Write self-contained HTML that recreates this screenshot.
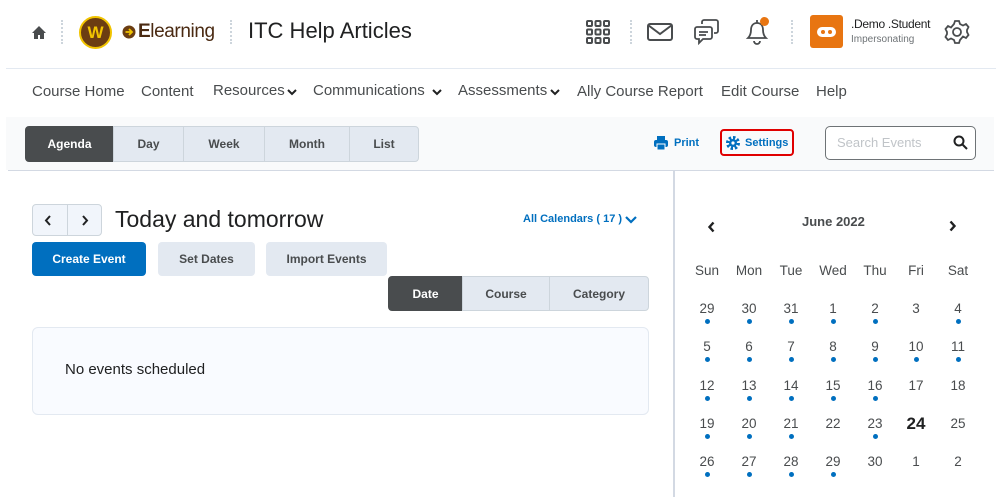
<!DOCTYPE html>
<html><head><style>
*{box-sizing:border-box;margin:0;padding:0}
body{width:1002px;height:497px;overflow:hidden;background:#fff;font-family:"Liberation Sans",sans-serif;color:#494c4e;position:relative}
.a{position:absolute}
.t{position:absolute;white-space:nowrap}
.nav{font-size:15px;color:#494c4e;top:83px}
.seg{position:absolute;top:126px;height:36px;background:#e3e9f1;border:1px solid #cdd5dc;font-size:12px;font-weight:bold;color:#494c4e;display:flex;align-items:center;justify-content:center}
.btn{position:absolute;height:34px;border-radius:4px;display:flex;align-items:center;justify-content:center;font-size:12px;font-weight:bold}
.cal{position:absolute;width:40px;text-align:center;font-size:13.5px;color:#494c4e}
.dot{position:absolute;width:5px;height:5px;border-radius:50%;background:#006fbf}
.dv{position:absolute;width:2px;height:24px;border-left:2px dotted #cdd5dc}
.chev{position:absolute}
</style></head><body>
<!-- header -->
<svg class="a" style="left:31px;top:25px" width="16" height="15" viewBox="0 0 16 15"><path d="M8 1L1 8h2v6h4v-4h2v4h4V8h2z" fill="#494c4e"/></svg>
<div class="dv" style="left:61px;top:20px"></div>
<div class="a" style="left:79px;top:16px;width:33px;height:33px;border-radius:50%;background:#6b3d12;border:2px solid #f1c400"></div>
<div class="t" style="left:79px;top:23px;width:33px;text-align:center;font-size:17px;font-weight:bold;color:#f1c400">W</div>
<svg class="a" style="left:122px;top:25px" width="14" height="14" viewBox="0 0 14 14"><circle cx="7" cy="7" r="6.5" fill="#6b3d12"/><path d="M3.5 7h6M7 4l3 3-3 3" fill="none" stroke="#f1c400" stroke-width="1.8"/></svg>
<div class="t" style="left:138px;top:21px;font-size:19px;color:#4a2a12;letter-spacing:-0.4px"><b>E</b>learning</div>
<div class="dv" style="left:230px;top:20px"></div>
<div class="t" style="left:248px;top:18px;font-size:22px;color:#202122">ITC Help Articles</div>
<svg class="a" style="left:586px;top:20px" width="24" height="24" viewBox="0 0 24 24" fill="none" stroke="#494c4e" stroke-width="2"><rect x="1" y="1" width="5" height="5" rx="1"/><rect x="9.5" y="1" width="5" height="5" rx="1"/><rect x="18" y="1" width="5" height="5" rx="1"/><rect x="1" y="9.5" width="5" height="5" rx="1"/><rect x="9.5" y="9.5" width="5" height="5" rx="1"/><rect x="18" y="9.5" width="5" height="5" rx="1"/><rect x="1" y="18" width="5" height="5" rx="1"/><rect x="9.5" y="18" width="5" height="5" rx="1"/><rect x="18" y="18" width="5" height="5" rx="1"/></svg>
<div class="dv" style="left:630px;top:20px"></div>
<svg class="a" style="left:647px;top:23px" width="26" height="18" viewBox="0 0 26 18" fill="none" stroke="#494c4e" stroke-width="2"><rect x="1" y="1" width="24" height="16" rx="2"/><path d="M1 2l12 9 12-9"/></svg>
<svg class="a" style="left:694px;top:19px" width="26" height="26" viewBox="0 0 26 26" fill="none" stroke="#494c4e" stroke-width="1.8"><path d="M8 5V3a2 2 0 012-2h12a2 2 0 012 2v9a2 2 0 01-2 2h-2"/><path d="M3 8h13a2 2 0 012 2v8a2 2 0 01-2 2H9l-4 4v-4H3a2 2 0 01-2-2v-8a2 2 0 012-2z"/><path d="M5 13h9M5 16h7"/></svg>
<svg class="a" style="left:744px;top:17px" width="26" height="28" viewBox="0 0 26 28" fill="none" stroke="#494c4e" stroke-width="1.8"><path d="M4 21c2-2 3-4 3-8s2-7 6-7 6 3 6 7 1 6 3 8z"/><path d="M10 24a3 3 0 006 0"/><path d="M13 3v3"/></svg>
<div class="a" style="left:760px;top:17px;width:9px;height:9px;border-radius:50%;background:#e87511"></div>
<div class="dv" style="left:791px;top:20px"></div>
<div class="a" style="left:810px;top:15px;width:33px;height:33px;border-radius:3px;background:#e87511"></div>
<div class="a" style="left:817px;top:27px;width:19px;height:10px;border-radius:5px;background:#fff"></div>
<div class="a" style="left:821px;top:30px;width:4px;height:4px;border-radius:50%;background:#e87511"></div>
<div class="a" style="left:828px;top:30px;width:4px;height:4px;border-radius:50%;background:#e87511"></div>
<div class="t" style="left:851px;top:17px;font-size:12px;color:#202122;letter-spacing:-0.3px">.Demo .Student</div>
<div class="t" style="left:851px;top:34px;font-size:10px;color:#6e7376">Impersonating</div>
<svg class="a" style="left:944px;top:19px" width="26" height="26" viewBox="0 0 26 26" fill="none" stroke="#494c4e" stroke-width="1.8"><circle cx="13" cy="13" r="4"/><path d="M11 2h4l1 3 3 1.5 3-1.5 2.5 3-1.5 3v2l1.5 3-2.5 3-3-1.5L16 21l-1 3h-4l-1-3-3-1.5L4 21l-2.5-3L3 15v-2L1.5 10 4 7l3 1.5L10 5z"/></svg>
<div class="a" style="left:6px;top:68px;width:990px;height:1px;background:#e3e9f1"></div>
<!-- nav -->
<div class="t nav" style="left:32px">Course Home</div>
<div class="t nav" style="left:141px">Content</div>
<div class="t nav" style="left:213px;top:82px">Resources</div>
<svg class="chev" style="left:287px;top:89px" width="10" height="7" viewBox="0 0 10 7" fill="none" stroke="#202122" stroke-width="2"><path d="M1 1l4 4 4-4"/></svg>
<div class="t nav" style="left:313px;top:82px">Communications</div>
<svg class="chev" style="left:432px;top:89px" width="10" height="7" viewBox="0 0 10 7" fill="none" stroke="#202122" stroke-width="2"><path d="M1 1l4 4 4-4"/></svg>
<div class="t nav" style="left:458px;top:82px">Assessments</div>
<svg class="chev" style="left:550px;top:89px" width="10" height="7" viewBox="0 0 10 7" fill="none" stroke="#202122" stroke-width="2"><path d="M1 1l4 4 4-4"/></svg>
<div class="t nav" style="left:577px">Ally Course Report</div>
<div class="t nav" style="left:721px">Edit Course</div>
<div class="t nav" style="left:816px">Help</div>
<!-- toolbar -->
<div class="a" style="left:6px;top:117px;width:988px;height:53px;background:#f9fafb"></div>
<div class="a" style="left:8px;top:170px;width:986px;height:1px;background:#d3d9e3"></div>
<div class="seg" style="left:25px;width:89px;background:#494c4e;color:#fff;border-color:#494c4e;border-radius:4px 0 0 4px">Agenda</div>
<div class="seg" style="left:113px;width:71px">Day</div>
<div class="seg" style="left:183px;width:82px">Week</div>
<div class="seg" style="left:264px;width:86px">Month</div>
<div class="seg" style="left:349px;width:70px;border-radius:0 4px 4px 0">List</div>
<svg class="a" style="left:654px;top:136px" width="14" height="14" viewBox="0 0 14 14"><rect x="3" y="0" width="8" height="4" fill="#006fbf"/><rect x="0" y="4" width="14" height="7" rx="2" fill="#006fbf"/><rect x="3" y="8" width="8" height="6" fill="#006fbf" stroke="#fff"/></svg>
<div class="t" style="left:674px;top:137px;font-size:11px;font-weight:bold;color:#006fbf">Print</div>
<div class="a" style="left:720px;top:129px;width:74px;height:27px;border:2px solid #e00000;border-radius:4px"></div>
<svg class="a" style="left:726px;top:136px" width="14" height="14" viewBox="0 0 14 14"><circle cx="7" cy="7" r="5" fill="none" stroke="#006fbf" stroke-width="4" stroke-dasharray="2.2 1.7"/><circle cx="7" cy="7" r="4" fill="#006fbf"/><circle cx="7" cy="7" r="1.6" fill="#fff"/></svg>
<div class="t" style="left:745px;top:137px;font-size:11px;font-weight:bold;color:#006fbf">Settings</div>
<div class="a" style="left:825px;top:126px;width:151px;height:34px;border:1px solid #6e7376;border-radius:5px;background:#fff"></div>
<div class="t" style="left:837px;top:135px;font-size:13px;color:#c0c4c8">Search Events</div>
<svg class="a" style="left:953px;top:135px" width="15" height="15" viewBox="0 0 15 15" fill="none" stroke="#202122" stroke-width="2"><circle cx="6" cy="6" r="4.5"/><path d="M9.5 9.5L14 14"/></svg>
<!-- divider -->
<div class="a" style="left:673px;top:171px;width:2px;height:326px;background:#d3d9e3"></div>
<!-- left -->
<div class="a" style="left:32px;top:204px;width:70px;height:32px;border:1px solid #cdd5dc;border-radius:4px;background:#f1f5fb"></div>
<div class="a" style="left:67px;top:205px;width:1px;height:30px;background:#cdd5dc"></div>
<svg class="a" style="left:44px;top:215px" width="7" height="11" viewBox="0 0 7 11" fill="none" stroke="#202122" stroke-width="2"><path d="M6 1L2 5.5 6 10"/></svg>
<svg class="a" style="left:82px;top:215px" width="7" height="11" viewBox="0 0 7 11" fill="none" stroke="#202122" stroke-width="2"><path d="M1 1l4 4.5L1 10"/></svg>
<div class="t" style="left:115px;top:206px;font-size:23px;color:#202122">Today and tomorrow</div>
<div class="t" style="left:523px;top:213px;font-size:11px;font-weight:bold;color:#006fbf">All Calendars ( 17 )</div>
<svg class="a" style="left:625px;top:216px" width="12" height="8" viewBox="0 0 12 8" fill="none" stroke="#006fbf" stroke-width="2.2"><path d="M1 1l5 5 5-5"/></svg>
<div class="btn" style="left:32px;top:242px;width:114px;background:#006fbf;color:#fff">Create Event</div>
<div class="btn" style="left:158px;top:242px;width:97px;background:#e3e9f1;color:#494c4e">Set Dates</div>
<div class="btn" style="left:266px;top:242px;width:121px;background:#e3e9f1;color:#494c4e">Import Events</div>
<div class="seg" style="top:276px;height:35px;left:388px;width:75px;background:#494c4e;color:#fff;border-color:#494c4e;border-radius:4px 0 0 4px">Date</div>
<div class="seg" style="top:276px;height:35px;left:462px;width:88px">Course</div>
<div class="seg" style="top:276px;height:35px;left:549px;width:100px;border-radius:0 4px 4px 0">Category</div>
<div class="a" style="left:32px;top:327px;width:617px;height:88px;border:1px solid #e3e9f1;border-radius:6px;background:#f9fbff"></div>
<div class="t" style="left:65px;top:361px;font-size:15px;color:#202122">No events scheduled</div>
<!-- right calendar -->
<svg class="a" style="left:707px;top:221px" width="8" height="12" viewBox="0 0 8 12" fill="none" stroke="#202122" stroke-width="2.4"><path d="M6.5 1.5L2.5 6l4 4.5"/></svg>
<svg class="a" style="left:949px;top:220px" width="8" height="12" viewBox="0 0 8 12" fill="none" stroke="#202122" stroke-width="2.4"><path d="M1.5 1.5l4 4.5-4 4.5"/></svg>
<div class="t" style="left:802px;top:214px;font-size:13px;font-weight:bold;color:#494c4e">June 2022</div>
<div id="c"></div>
<script>
var xs=[707,749,791,833,875,916,958],ys=[309,347,386,424,462];
var h="",dn=["Sun","Mon","Tue","Wed","Thu","Fri","Sat"];
dn.forEach(function(d,i){h+='<div class="cal" style="left:'+(xs[i]-20)+'px;top:263px">'+d+'</div>';});
var days=[[29,30,31,1,2,3,4],[5,6,7,8,9,10,11],[12,13,14,15,16,17,18],[19,20,21,22,23,24,25],[26,27,28,29,30,1,2]];
var dots=[[1,1,1,1,1,0,1],[1,1,1,1,1,1,1],[1,1,1,1,1,0,0],[1,1,1,0,1,0,0],[1,1,1,1,0,0,0]];
days.forEach(function(r,ri){r.forEach(function(d,i){
var b=(ri==3&&i==5);
h+='<div class="cal" style="left:'+(xs[i]-20)+'px;top:'+(ys[ri]-8-(b?2:0))+'px;'+(b?'font-size:17px;font-weight:bold;color:#202122':'')+'">'+d+'</div>';
if(dots[ri][i])h+='<div class="dot" style="left:'+(xs[i]-2.5)+'px;top:'+(ys[ri]+10)+'px"></div>';});});
document.getElementById("c").innerHTML=h;
</script>
</body></html>
